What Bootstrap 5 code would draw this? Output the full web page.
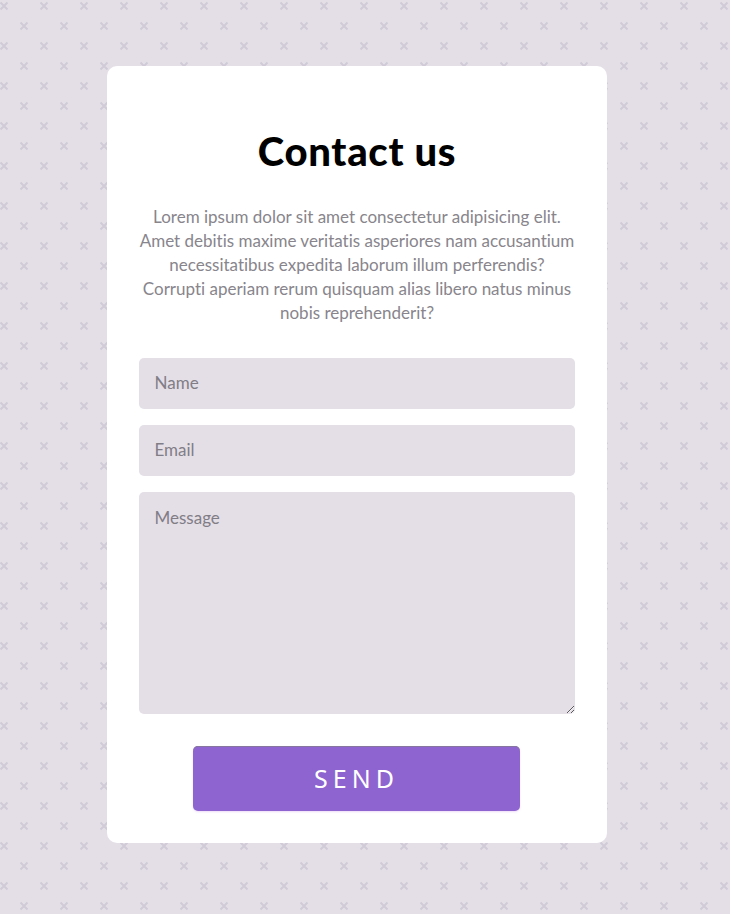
<!DOCTYPE html>
<html lang="en">
<head>
<meta charset="utf-8">
<title>Contact us</title>
<link href="https://cdn.jsdelivr.net/npm/bootstrap@5.3.0/dist/css/bootstrap.min.css" rel="stylesheet">
<style>
html,body{height:100%}
body.page-bg{background-color:#e4dfe6;background-image:url("data:image/svg+xml,%3Csvg xmlns='http://www.w3.org/2000/svg' width='40' height='40'%3E%3Cg stroke='%23d0cbd7' stroke-width='2' fill='none'%3E%3Cpath d='M0.5 2.5l7 7M7.5 2.5l-7 7M20.5 22.5l7 7M27.5 22.5l-7 7'/%3E%3C/g%3E%3C/svg%3E");margin:0;font-family:"Lato","Noto Sans",sans-serif;font-variant-ligatures:none}
.shell{width:500px;margin-left:107px;padding:66px 0 71px}
.panel{background:#fff;border-radius:10px;padding:32px}
.title{font-family:"Lato",sans-serif;font-weight:900;font-size:40px;letter-spacing:.7px;line-height:45px;color:#000;text-align:center;margin:31px 0 31px}
.intro{font-size:17px;line-height:24px;color:#88858c;text-align:center;margin:0 0 33px}
.field.form-control{background:#e4dfe6;border:0;border-radius:5px;height:51px;padding:0 15.5px 2px;font-size:17px;color:#333;box-shadow:none}
.field.form-control::placeholder{color:#817d86;opacity:1}
textarea.field.form-control{height:222px;padding-top:14px;line-height:24px;resize:vertical}
.send.btn{display:block;width:327px;height:65px;margin:32px 0 0 54px;background:#8e64d0;border:0;border-radius:5px;color:#fff;font-family:"Noto Sans",sans-serif;font-size:25px;line-height:1;letter-spacing:5px;box-shadow:inset 0 1px 0 #86779f,0 1px 2px rgba(190,120,230,.25)}
</style>
</head>
<body class="page-bg">
<div class="shell">
<div class="panel">
<h1 class="title">Contact us</h1>
<p class="intro">Lorem ipsum dolor sit amet consectetur adipisicing elit. Amet debitis maxime veritatis asperiores nam accusantium necessitatibus expedita laborum illum perferendis? Corrupti aperiam rerum quisquam alias libero natus minus nobis reprehenderit?</p>
<form class="d-flex flex-column gap-3">
<input class="form-control field" type="text" placeholder="Name">
<input class="form-control field" type="email" placeholder="Email">
<textarea class="form-control field" placeholder="Message"></textarea>
</form>
<button class="btn send" type="button">SEND</button>
</div>
</div>
<script src="https://cdn.jsdelivr.net/npm/bootstrap@5.3.0/dist/js/bootstrap.bundle.min.js"></script>
</body>
</html>
